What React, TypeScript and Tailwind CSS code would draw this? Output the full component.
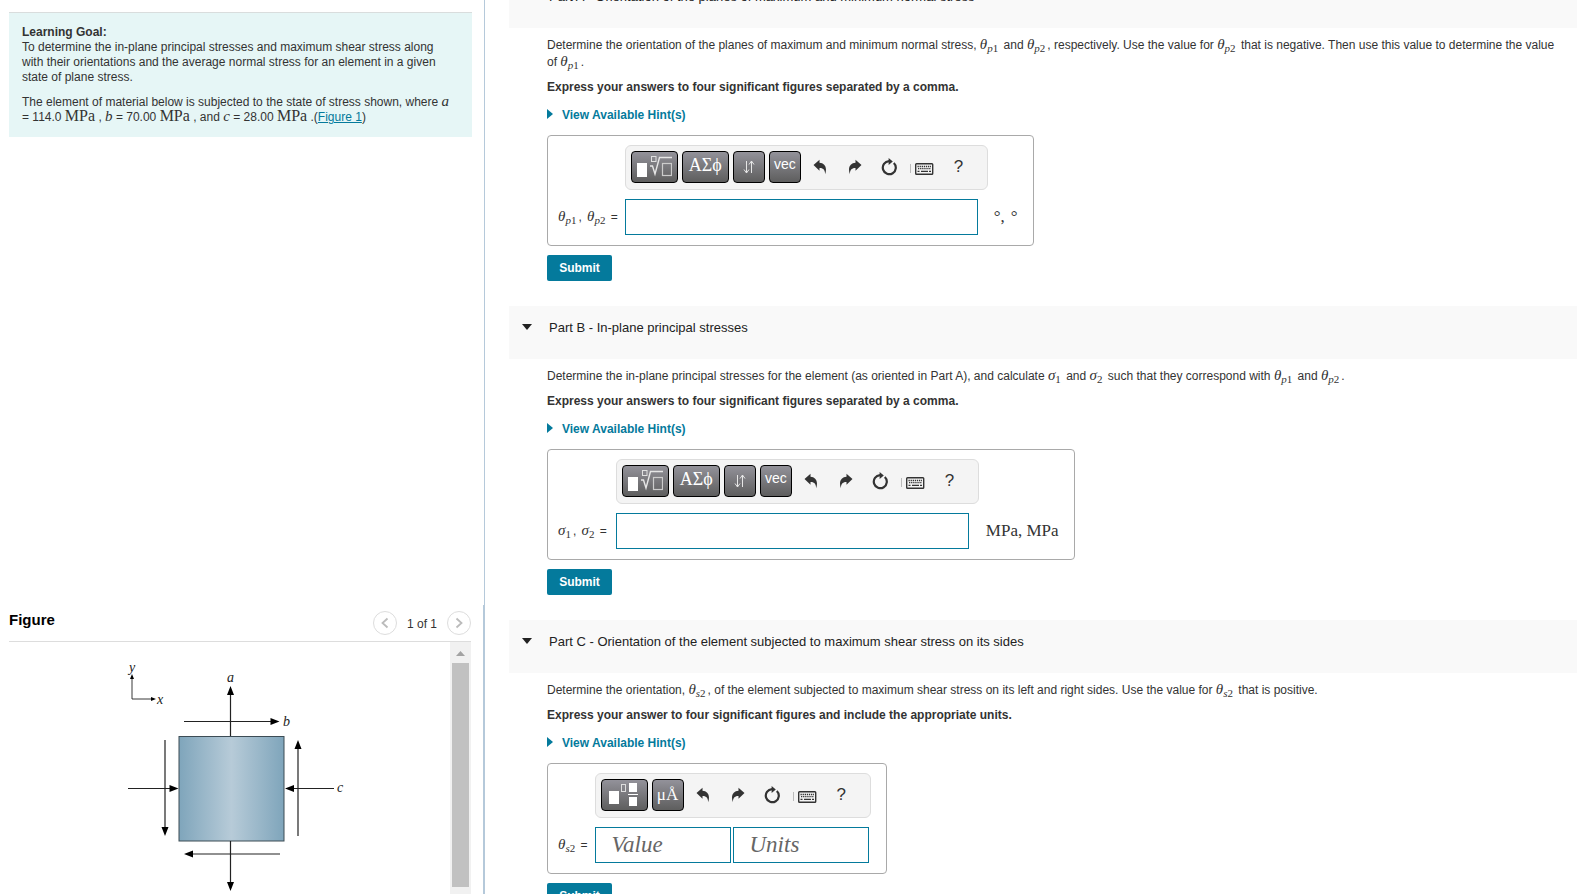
import type { ReactNode } from "react";

const UndoIcon = ({ className = "" }: { className?: string }) => (
  <svg width="14" height="16" viewBox="0 0 14 16" fill="#333" className={className} aria-hidden="true">
    <path d="M0.5 6 6.5 0.8v3c5 0.2 8 4.4 5.7 11.4-0.2-4.2-1.7-6.3-5.7-6.2v2.8z" />
  </svg>
);

const ResetIcon = () => (
  <svg width="18" height="18" viewBox="0 0 18 18" aria-hidden="true">
    <path d="M13.8 5A6.5 6.5 0 1 1 9 3.2" fill="none" stroke="#333" strokeWidth="2.2" />
    <path d="M8.6 0 12.8 3.6 8.6 7z" fill="#333" />
  </svg>
);

const KeyboardIcon = () => (
  <svg width="24" height="12" viewBox="0 0 24 12" aria-hidden="true">
    <path d="M0.5 1v9" stroke="#bbb" />
    <rect x="5.7" y="0.7" width="17" height="10.6" rx="0.8" fill="#f4f4f4" stroke="#333" strokeWidth="1.4" />
    <path d="M7.5 3.5H21" stroke="#333" strokeWidth="1.3" strokeDasharray="1.3 0.8" />
    <path d="M8 5.7h13" stroke="#333" strokeWidth="1.3" strokeDasharray="1.3 0.8" />
    <path d="M7.5 8.3h2M11 8.3h7M19 8.3h2" stroke="#333" strokeWidth="1.3" />
  </svg>
);

const RootIcon = () => (
  <svg width="35" height="22" viewBox="0 0 35 22" fill="none" aria-hidden="true">
    <rect x="0" y="7" width="10" height="14" fill="#fff" />
    <path d="M13 10h2.5l2.5 8L22.5 1.5H35" stroke="#e6e6e6" strokeWidth="1.4" />
    <rect x="14.5" y="0.5" width="4.5" height="5" stroke="#e0e0e0" />
    <rect x="25.5" y="7.5" width="9" height="12" stroke="#ccc" strokeWidth="1.2" />
  </svg>
);

const FractionIcon = () => (
  <svg width="31" height="26" viewBox="0 0 31 26" fill="none" aria-hidden="true">
    <path d="M0 9h10v13H0zM20 1h8v9h-8zM20 15h8v9h-8z" fill="#fff" />
    <path d="M19 12.5h10" stroke="#fff" />
    <rect x="12.5" y="2.5" width="4" height="7" stroke="#ddd" />
  </svg>
);

const ArrowsIcon = () => (
  <svg width="12" height="14" viewBox="0 0 12 14" fill="none" stroke="#e6e6e6" aria-hidden="true">
    <path d="M3.5 1v12M1 9.5 3.5 13M6 9.5 3.5 13M8.5 13V1M6 4.500 8.5 1 11 4.500" />
  </svg>
);

interface SymbolProps {
  name: string;
  sub?: string;
}
// Only letters are italic, a digit in the subscript stays upright
const Sym = ({ name, sub = "" }: SymbolProps) => (
  <span className={`whitespace-nowrap font-['Liberation_Serif',serif] text-[15px] leading-[0] italic ${sub && "pr-0.5"}`}>
    {name}
    {sub && (
      <sub className="text-[11px] leading-[0]">
        {sub.slice(0, -1)}
        <span className="not-italic">{sub.slice(-1)}</span>
      </sub>
    )}
  </span>
);

const Mpa = () => <span className="font-['Liberation_Serif',serif] text-[16px] leading-[0]">MPa</span>;

interface ToolButtonProps {
  label: string;
  wide?: boolean;
  children: ReactNode;
}
const ToolButton = ({ label, wide, children }: ToolButtonProps) => (
  <button
    aria-label={label}
    className={`flex h-8 items-center justify-center rounded border border-black bg-linear-to-b from-[#93929a] to-[#5e5e5e] text-white ${
      wide ? "w-[47px]" : "w-8"
    }`}
  >
    {children}
  </button>
);

const Toolbar = ({ units }: { units?: boolean }) => (
  <div
    role="toolbar"
    className={`flex h-[45px] items-center rounded-md border border-[#ddd] bg-[#f4f4f4] pb-0.5 pl-[5px] ${
      units ? "w-[276px]" : "w-[363px]"
    }`}
  >
    <div className="flex gap-1">
      {units ? (
        <>
          <ToolButton label="Templates" wide>
            <FractionIcon />
          </ToolButton>
          <ToolButton label="Units">
            <span className="font-['Liberation_Serif',serif] text-[17px]">μÅ</span>
          </ToolButton>
        </>
      ) : (
        <>
          <ToolButton label="Templates" wide>
            <RootIcon />
          </ToolButton>
          <ToolButton label="Greek letters" wide>
            <span className="pb-0.5 font-['Liberation_Serif',serif] text-[18px]">ΑΣϕ</span>
          </ToolButton>
          <ToolButton label="Arrows">
            <ArrowsIcon />
          </ToolButton>
          <ToolButton label="Vector">
            <span className="pb-1 text-[14px]">vec</span>
          </ToolButton>
        </>
      )}
    </div>
    <div className="ml-3 flex items-center text-[#333]">
      <button aria-label="Undo">
        <UndoIcon />
      </button>
      <button aria-label="Redo" className="ml-[21px]">
        <UndoIcon className="-scale-x-100" />
      </button>
      <button aria-label="Reset" className="ml-[18px]">
        <ResetIcon />
      </button>
      <button aria-label="Keyboard shortcuts" className="ml-3 pt-1">
        <KeyboardIcon />
      </button>
      <button aria-label="Help" className="ml-5 text-[17px]">
        ?
      </button>
    </div>
  </div>
);

interface PartProps {
  title: string;
  subtitle: string;
  instruction: string;
  question: ReactNode;
  children: ReactNode;
}
const Part = ({ title, subtitle, instruction, question, children }: PartProps) => (
  <section className="pb-[25px]">
    <h2 className="flex h-[53px] bg-[#f9f9f9] pt-[13px] pl-[13px] text-[13px] leading-[18px] text-[#222]">
      <button aria-label={"Collapse " + title} className="mt-[3px] h-2.5 w-2.5">
        <svg width="10" height="6" viewBox="0 0 10 6" aria-hidden="true">
          <path d="M0 0h10L5 6z" fill="#222" />
        </svg>
      </button>
      <span className="ml-[17px]">
        {title} - {subtitle}
      </span>
    </h2>
    <div className="pt-[9px] pr-5 pl-[38px]">
      <p className="leading-[17px]">{question}</p>
      <p className="mt-2 font-bold leading-4">{instruction}</p>
      <button className="mt-3 flex items-center gap-[9px] font-bold leading-4 text-[#047a9c]">
        <svg width="6" height="12" viewBox="0 0 6 12" aria-hidden="true">
          <path d="M0 0 6 5 0 10z" fill="#047a9c" />
        </svg>
        View Available Hint(s)
      </button>
      {children}
      <button className="mt-[9px] block h-[26px] w-[65px] rounded-[2px] bg-[#047a9c] text-[12px] font-bold text-white">
        Submit
      </button>
    </div>
  </section>
);

const AnswerBox = ({ children }: { children: ReactNode }) => (
  <div className="mt-3 grid w-fit grid-cols-[auto_auto_auto] items-center gap-y-[9px] rounded border border-[#a9a9a9] pt-[9px] pr-[15px] pb-2.5 pl-2.5">
    {children}
  </div>
);

export default function App() {
  return (
    <div className="flex h-screen overflow-hidden bg-white font-['Liberation_Sans',Arial,sans-serif] text-[12px] text-[#333]">
      <aside className="flex w-[485px] flex-none flex-col">
        <div className="flex-1 border-r border-[#b5c9da] pt-3 pr-3 pl-[9px]">
          <div className="border-t border-[#d9dddd] bg-[#e6f6f6] pt-3 pr-4 pb-3 pl-[13px] leading-[15px]">
            <p className="font-bold">Learning Goal:</p>
            <p>
              To determine the in-plane principal stresses and maximum shear stress along with their orientations and the average
              normal stress for an element in a given state of plane stress.
            </p>
            <p className="mt-2.5">
              The element of material below is subjected to the state of stress shown, where <Sym name="a" /> = 114.0 <Mpa /> ,{" "}
              <Sym name="b" /> = 70.00 <Mpa /> , and <Sym name="c" /> = 28.00 <Mpa /> .(
              <a href="#figure" className="text-[#047a9c] underline">
                Figure 1
              </a>
              )
            </p>
          </div>
        </div>

        <div id="figure" className="flex h-[289px] flex-col border-r-2 border-[#b5c9da] pr-3 pl-[9px]">
          <div className="flex h-[37px] items-center justify-between border-b border-[#ddd]">
            <h2 className="pb-1.5 text-[15px] font-bold text-black">Figure</h2>
            <div className="flex items-center gap-2.5">
              <button aria-label="Previous figure" className="flex h-6 w-6 items-center justify-center rounded-full border border-[#ddd]">
                <svg width="8" height="12" viewBox="0 0 8 12" fill="none" stroke="#bbb" strokeWidth="1.8" aria-hidden="true">
                  <path d="M6.5 1.5 1.5 6l5 4.5" />
                </svg>
              </button>
              <span className="pt-px">1 of 1</span>
              <button aria-label="Next figure" className="flex h-6 w-6 items-center justify-center rounded-full border border-[#ddd]">
                <svg width="8" height="12" viewBox="0 0 8 12" fill="none" stroke="#bbb" strokeWidth="1.8" aria-hidden="true">
                  <path d="M1.5 1.5 6.5 6l-5 4.5" />
                </svg>
              </button>
            </div>
          </div>
          <div className="flex min-h-0 flex-1">
            <div className="min-w-0 flex-1 pl-[111px]">
              <StressFigure />
            </div>
            <div className="flex w-[21px] flex-none flex-col items-center bg-[#f1f1f1] pt-[9px] pb-[7px]">
              <svg width="9" height="5" viewBox="0 0 9 5" className="flex-none" aria-hidden="true">
                <path d="M0 5 4.5 0 9 5z" fill="#a3a3a3" />
              </svg>
              <div className="mt-[7px] w-[17px] flex-1 bg-[#c1c1c1]" />
            </div>
          </div>
        </div>
      </aside>

      <main className="-mt-[25px] flex-1 pr-[13px] pl-6">
        <Part
          title="Part A"
          subtitle="Orientation of the planes of maximum and minimum normal stress"
          instruction="Express your answers to four significant figures separated by a comma."
          question={
            <>
              Determine the orientation of the planes of maximum and minimum normal stress, <Sym name="θ" sub="p1" /> and{" "}
              <Sym name="θ" sub="p2" />, respectively. Use the value for <Sym name="θ" sub="p2" /> that is negative. Then use this
              value to determine the value of <Sym name="θ" sub="p1" />.
            </>
          }
        >
          <AnswerBox>
            <div className="col-start-2 col-end-4">
              <Toolbar />
            </div>
            <label htmlFor="angles" className="pr-[7px]">
              <Sym name="θ" sub="p1" />
              <span className="mr-0.5">,</span> <Sym name="θ" sub="p2" /> =
            </label>
            <input id="angles" className="h-9 w-[353px] border border-[#047a9c] px-3 outline-none" />
            <span className="flex gap-1.5 pl-4 font-['Liberation_Serif',serif] text-[17px]">
              <span>°,</span>
              <span>°</span>
            </span>
          </AnswerBox>
        </Part>

        <Part
          title="Part B"
          subtitle="In-plane principal stresses"
          instruction="Express your answers to four significant figures separated by a comma."
          question={
            <>
              Determine the in-plane principal stresses for the element (as oriented in Part A), and calculate{" "}
              <Sym name="σ" sub="1" /> and <Sym name="σ" sub="2" /> such that they correspond with <Sym name="θ" sub="p1" /> and{" "}
              <Sym name="θ" sub="p2" />.
            </>
          }
        >
          <AnswerBox>
            <div className="col-start-2 col-end-4">
              <Toolbar />
            </div>
            <label htmlFor="stresses" className="pr-[9px]">
              <Sym name="σ" sub="1" />
              <span className="mr-0.5">,</span> <Sym name="σ" sub="2" /> =
            </label>
            <input id="stresses" className="h-9 w-[353px] border border-[#047a9c] px-3 outline-none" />
            <span className="pl-[17px] font-['Liberation_Serif',serif] text-[17px]">MPa, MPa</span>
          </AnswerBox>
        </Part>

        <Part
          title="Part C"
          subtitle="Orientation of the element subjected to maximum shear stress on its sides"
          instruction="Express your answer to four significant figures and include the appropriate units."
          question={
            <>
              Determine the orientation, <Sym name="θ" sub="s2" />, of the element subjected to maximum shear stress on its left and
              right sides. Use the value for <Sym name="θ" sub="s2" /> that is positive.
            </>
          }
        >
          <AnswerBox>
            <div className="col-start-2 col-end-4">
              <Toolbar units />
            </div>
            <label htmlFor="shear-value" className="pr-[7px]">
              <Sym name="θ" sub="s2" /> =
            </label>
            <div className="flex gap-0.5">
              <input
                id="shear-value"
                placeholder="Value"
                className="h-9 w-[136px] border border-[#047a9c] px-4 font-['Liberation_Serif',serif] text-[23px] italic outline-none placeholder:text-[#666]"
              />
              <input
                aria-label="Units"
                placeholder="Units"
                className="h-9 w-[136px] border border-[#047a9c] px-4 font-['Liberation_Serif',serif] text-[23px] italic outline-none placeholder:text-[#666]"
              />
            </div>
          </AnswerBox>
        </Part>
      </main>
    </div>
  );
}

// Stress element with its normal and shear arrows
function StressFigure() {
  return (
    <svg width="240" height="252" viewBox="120 642 240 252" aria-label="Stress element">
      <defs>
        <linearGradient id="steel">
          <stop offset="0" stopColor="#7fa5bb" />
          <stop offset="0.5" stopColor="#b7cbd8" />
          <stop offset="1" stopColor="#7fa5bb" />
        </linearGradient>
      </defs>
      <rect x="179" y="736.5" width="105" height="104.5" fill="url(#steel)" stroke="#3c4c55" />
      <g stroke="#222" strokeWidth="1.2" fill="none">
        <path d="M132 678v21h20" strokeWidth="0.9" />
        <path d="M230.5 694v42M230.5 841v42M184 721.5h88M192 854h88M165 740v88M298 748v88M128 788.5h43M292 788.5h42" />
      </g>
      <g fill="#000">
        <path d="M132 674l-2 5h4zM156 699l-5-2v4z" />
        <path d="M230.5 686l-3.5 9h7zM230.5 891l-3.5-9h7z" />
        <path d="M279.5 721.5l-9-3.5v7zM184 854l9-3.5v7z" />
        <path d="M165 836l-3.5-9h7zM298 740l-3.5 9h7z" />
        <path d="M178.5 788.5l-9-3.5v7zM285 788.5l9-3.5v7z" />
      </g>
      <g className="font-['Liberation_Serif',serif] text-[14px] italic" fill="#222">
        <text x="129" y="672">y</text>
        <text x="157" y="704">x</text>
        <text x="227" y="682">a</text>
        <text x="283" y="726">b</text>
        <text x="337" y="792">c</text>
      </g>
    </svg>
  );
}
